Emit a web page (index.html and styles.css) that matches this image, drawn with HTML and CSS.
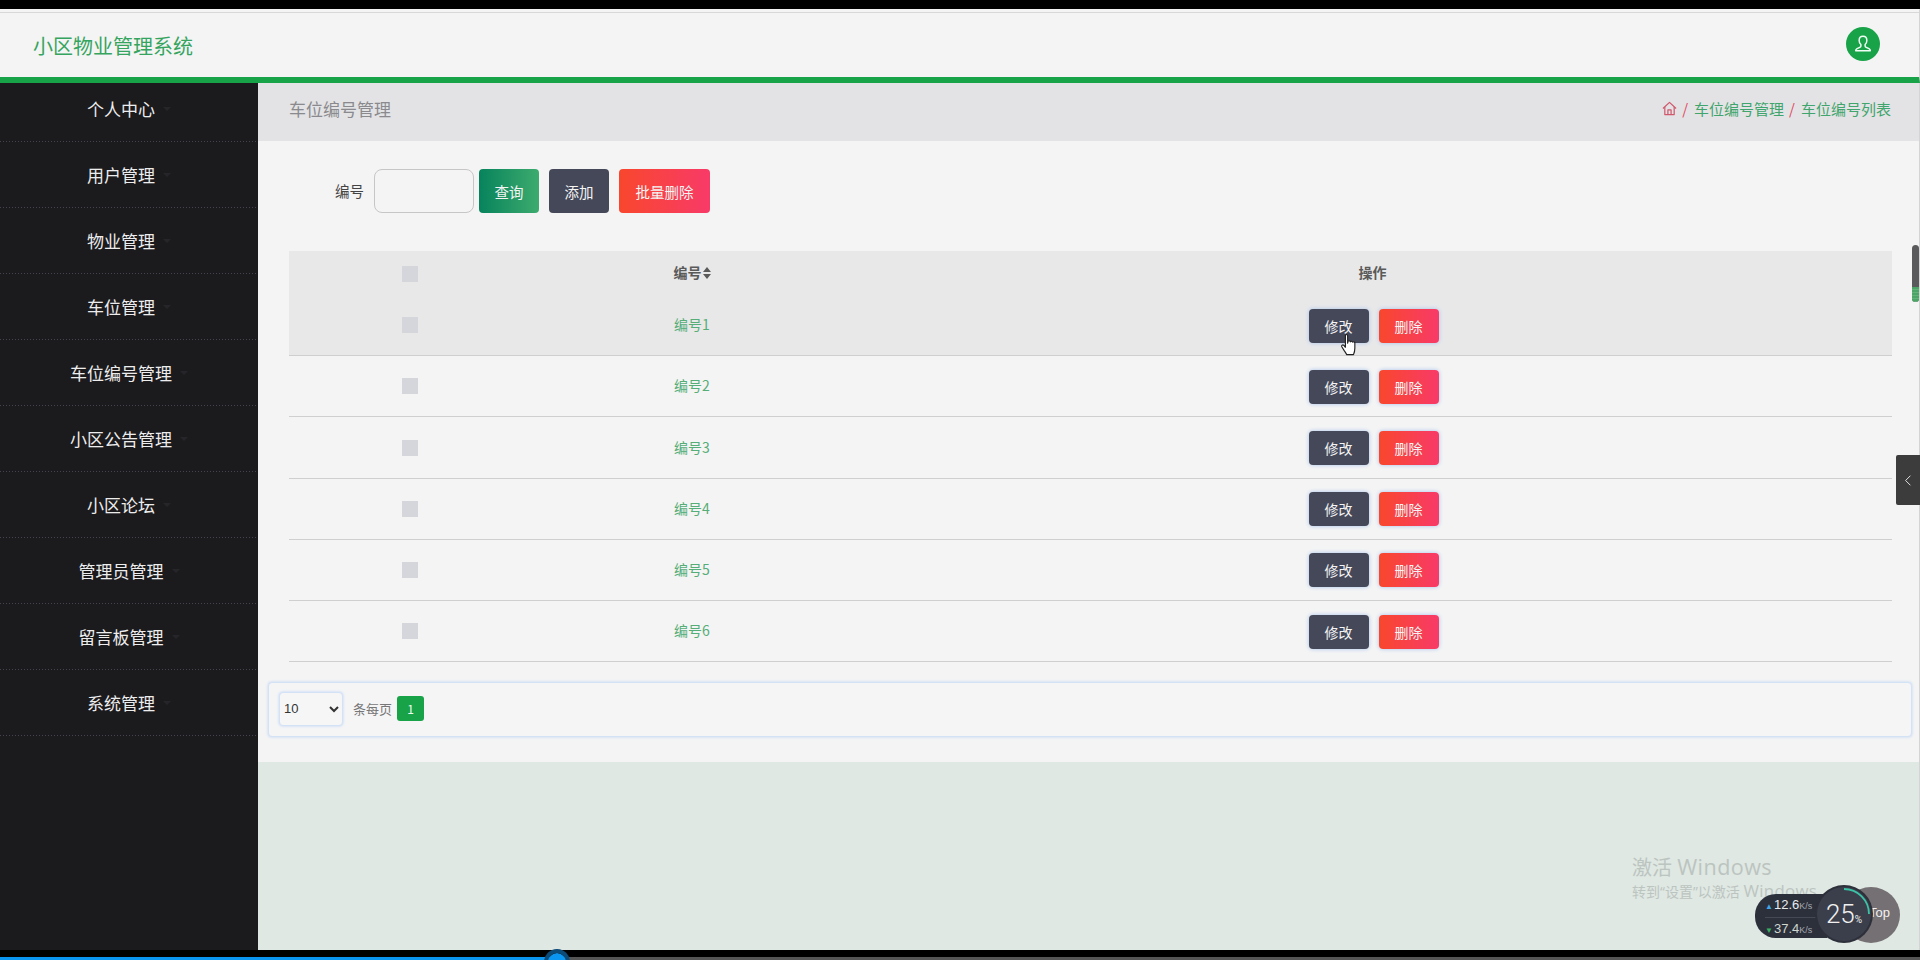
FILE: index.html
```html
<!DOCTYPE html>
<html lang="zh-CN">
<head>
<meta charset="utf-8">
<title>小区物业管理系统</title>
<link rel="stylesheet" href="styles.css">
</head>
<body>
<div class="screen">
  <div class="top-strip"></div>
  <header class="header">
    <div class="brand">小区物业管理系统</div>
    <div class="avatar">
      <svg viewBox="0 0 24 24" width="22" height="22" fill="none" stroke="#f2fff6" stroke-width="1.6" stroke-linejoin="round" stroke-linecap="round"><path d="M12 3.5c-2.600 0-4.200 2-4.200 4.600 0 1.900.8 3.400 1.900 4.400v1.800c0 .7-.5 1.100-1.200 1.400l-3 1.300c-1 .5-1.500 1.200-1.500 2.400h16c0-1.200-.5-1.900-1.500-2.400l-3-1.300c-.7-.3-1.200-.7-1.200-1.400v-1.800c1.100-1 1.900-2.500 1.900-4.400 0-2.600-1.600-4.600-4.200-4.600z"/></svg>
    </div>
  </header>
  <div class="main">
    <nav class="sidebar">
      <ul class="menu">
        <li class="menu-item">个人中心</li>
        <li class="menu-item">用户管理</li>
        <li class="menu-item">物业管理</li>
        <li class="menu-item">车位管理</li>
        <li class="menu-item">车位编号管理</li>
        <li class="menu-item">小区公告管理</li>
        <li class="menu-item">小区论坛</li>
        <li class="menu-item">管理员管理</li>
        <li class="menu-item">留言板管理</li>
        <li class="menu-item">系统管理</li>
      </ul>
    </nav>
    <main class="content">
      <div class="crumb-bar">
        <div class="crumb-title">车位编号管理</div>
        <div class="crumbs">
          <svg class="home" viewBox="0 0 16 16" width="15" height="15" fill="none" stroke="#d0586c" stroke-width="1.300" stroke-linejoin="round"><path d="M1 8l7-6.500L15 8"/><path d="M3 6.500V14.500h10V6.500"/><path d="M6.300 14.500V9.500h3.400v5"/></svg>
          <span class="sep">/</span><span>车位编号管理</span><span class="sep">/</span><span>车位编号列表</span>
        </div>
      </div>
      <section class="panel">
        <form class="search">
          <label class="search-label">编号</label>
          <input class="search-input" type="text">
          <button class="btn btn-query" type="button">查询</button>
          <button class="btn btn-add" type="button">添加</button>
          <button class="btn btn-danger btn-bulk" type="button">批量删除</button>
        </form>
        <table class="grid">
          <colgroup><col class="col-check"><col class="col-no"><col></colgroup>
          <thead>
            <tr>
              <th><span class="check"></span></th>
              <th><span class="cell-text">编号<svg class="sort" viewBox="0 0 8 12" width="8" height="12" fill="#5a5a5a"><path d="M4 0l4 5H0zM4 12L0 7h8z"/></svg></span></th>
              <th><span class="cell-text">操作</span></th>
            </tr>
          </thead>
          <tbody>
            <tr class="hover">
              <td><span class="check"></span></td><td class="no"><span class="cell-text">编号1</span></td>
              <td class="ops"><button class="btn btn-small btn-add" type="button">修改</button><button class="btn btn-small btn-danger" type="button">删除</button></td>
            </tr>
            <tr>
              <td><span class="check"></span></td><td class="no"><span class="cell-text">编号2</span></td>
              <td class="ops"><button class="btn btn-small btn-add" type="button">修改</button><button class="btn btn-small btn-danger" type="button">删除</button></td>
            </tr>
            <tr>
              <td><span class="check"></span></td><td class="no"><span class="cell-text">编号3</span></td>
              <td class="ops"><button class="btn btn-small btn-add" type="button">修改</button><button class="btn btn-small btn-danger" type="button">删除</button></td>
            </tr>
            <tr>
              <td><span class="check"></span></td><td class="no"><span class="cell-text">编号4</span></td>
              <td class="ops"><button class="btn btn-small btn-add" type="button">修改</button><button class="btn btn-small btn-danger" type="button">删除</button></td>
            </tr>
            <tr>
              <td><span class="check"></span></td><td class="no"><span class="cell-text">编号5</span></td>
              <td class="ops"><button class="btn btn-small btn-add" type="button">修改</button><button class="btn btn-small btn-danger" type="button">删除</button></td>
            </tr>
            <tr>
              <td><span class="check"></span></td><td class="no"><span class="cell-text">编号6</span></td>
              <td class="ops"><button class="btn btn-small btn-add" type="button">修改</button><button class="btn btn-small btn-danger" type="button">删除</button></td>
            </tr>
          </tbody>
        </table>
        <div class="pager">
          <select class="pager-size"><option>10</option></select>
          <span class="pager-text">条每页</span>
          <span class="pager-page">1</span>
        </div>
      </section>
    </main>
  </div>
  <div class="bottom-strip"><div class="progress"></div></div>
</div>

<svg class="cursor" viewBox="0 0 20 26" width="18" height="24" fill="#fff" stroke="#222" stroke-width="1.300" stroke-linejoin="round"><path d="M6 2.500c0-1.500 2.500-1.500 2.500 0V11l.6-2.500c1.600-.5 2.200 0 2.400 1 .2-.9 2.100-1 2.500.3.500-.7 2.300-.5 2.500.9v6c0 3.500-1.500 7-1.500 7H7.500S6 21 4.500 19L2 15c-.8-1.500 1-2.800 2.300-1.500L6 15.500z"/></svg>

<div class="side-thumb"><span class="thumb-green"></span></div>
<div class="side-tab">
  <svg viewBox="0 0 10 16" width="8" height="13" fill="none" stroke="#e6e6e6" stroke-width="1.200"><path d="M8 2L2 8l6 6"/></svg>
</div>

<div class="watermark">
  <div class="wm-title">激活 <span class="wm-latin">Windows</span></div>
  <div class="wm-sub">转到“设置”以激活 <span class="wm-latin-small">Windows</span>。</div>
</div>

<div class="monitor">
  <div class="top-bubble">Top</div>
  <div class="speed">
    <div class="speed-up"><span class="up-arrow">▲</span>12.6<small>K/s</small></div>
    <div class="speed-down"><span class="down-arrow">▼</span>37.4<small>K/s</small></div>
  </div>
  <div class="gauge">
    <svg class="gauge-arc" viewBox="0 0 58 58" width="58" height="58" fill="none" stroke="#3cc2a6" stroke-width="1.800"><path d="M29 4a25 25 0 0 1 25 25"/></svg>
    <span class="gauge-num">25</span><span class="gauge-pct">%</span>
  </div>
</div>
</body>
</html>
```
FILE: styles.css
```css
* { box-sizing: border-box; }
html, body { margin: 0; height: 960px; overflow: hidden; }
body {
  font-family: "Noto Sans CJK SC", "Noto Sans", sans-serif;
  background: #000;
  position: relative;
}
.screen { display: flex; flex-direction: column; height: 960px; }
.top-strip { height: 9px; background: #000; flex: none; }
.header {
  flex: none;
  height: 74px;
  display: flex;
  align-items: center;
  justify-content: space-between;
  padding: 0 39px 0 33px;
  background: #f4f4f4;
  border-top: 1px solid #f4f4f4;
  border-right: 1px solid #d4d4d4;
  border-bottom: 6px solid #18a348;
  box-shadow: inset 0 2px 0 #f4f4f4, inset 0 3px 0 #d8d8d8;
  position: relative;
  z-index: 2;
}
.brand { font-size: 20px; line-height: 28px; color: #34a45e; margin-top: 5px; }
.avatar {
  width: 34px; height: 34px;
  border-radius: 50%;
  background: #18a348;
  display: flex; align-items: center; justify-content: center;
}
.main { flex: 1; display: flex; min-height: 0; }
.sidebar { flex: none; width: 258px; background: #1b1a1d; }
.menu { list-style: none; margin: -7px 0 0; padding: 0; }
.menu-item {
  height: 66px;
  display: flex; align-items: center; justify-content: center;
  padding-bottom: 1px;
  font-size: 17px;
  color: #ededed;
  background: repeating-linear-gradient(90deg, #44444f 0 1px, transparent 1px 3px) left bottom / 100% 1px no-repeat;
}
.menu-item::after {
  content: "";
  margin-left: 8px;
  border: 4px solid transparent;
  border-top-color: #262529;
  border-bottom: 0;
}
.content { flex: 1; background: #dfe8e3; min-width: 0; border-right: 1px solid #d4d4d4; }
.crumb-bar {
  height: 58px;
  background: #e3e3e5;
  display: flex; align-items: center; justify-content: space-between;
  padding: 0 28px 7px 31px;
}
.crumb-title { font-size: 17px; color: #8a8a8e; }
.crumbs { display: flex; align-items: center; font-size: 15px; color: #3fa56c; }
.home { margin-right: 5px; }
.sep { color: #e24a62; margin: 0 6px 0 0; }
.crumbs span + .sep { margin-left: 5px; }
.panel { height: 621px; background: #f4f4f4; padding-top: 28px; }
.search { display: flex; align-items: center; height: 44px; padding-left: 77px; }
.search-label { font-size: 14.500px; color: #444; margin: -2px 10px 0 0; }
.search-input {
  width: 100px; height: 44px;
  margin-right: 5px;
  background: #f4f4f4;
  border: 1px solid #c6c6c6;
  border-radius: 8px;
}
.btn {
  border: 0; padding: 0;
  font-family: inherit;
  color: #f4f4f4;
  border-radius: 4px;
  font-size: 14.500px;
  height: 44px;
  width: 60px;
  margin-right: 10px;
}
.btn-query { background: linear-gradient(90deg, #07835c, #3dab6e); }
.btn-add { background: #454859; }
.btn-danger { background: linear-gradient(90deg, #f8472d, #f83a68); }
.btn-bulk { width: 91px; margin-right: 0; }
.btn-small {
  height: 34px;
  box-shadow: 0 0 4px #a8c4ee;
  font-size: 14px;
}
.btn-small:last-child { margin-right: 0; }
.grid {
  margin: 38px 0 0 31px;
  width: 1603px;
  border-collapse: collapse;
  table-layout: fixed;
}
.col-check { width: 242px; }
.col-no { width: 322px; }
.grid th {
  height: 46px;
  padding: 0;
  background: #e8e8e9;
  font-size: 14px;
  font-weight: 700;
  color: #5a5a5a;
  text-align: center;
}
.grid td {
  height: 61.200px;
  padding: 0;
  text-align: center;
  font-size: 14px;
  border-bottom: 1px solid #cfcfcf;
}
.grid .ops { padding: 1px 0 0 2px; }
.grid .hover td { height: 58.800px; padding-bottom: 3px; background: #e8e8e9; }
.grid .hover .ops { padding: 0 0 0 2px; }
.cell-text { position: relative; top: -2px; }
td .cell-text { top: -1px; }
.check { display: block; width: 16px; height: 16px; margin: 0 auto; background: #d5d6dc; }
.no { color: #55ad78; font-size: 14px; }
.sort { margin-left: 1px; vertical-align: -1px; }
.pager {
  margin: 20px 7px 0 10px;
  height: 55px;
  display: flex; align-items: center;
  padding: 0 0 2px 10px;
  background: #f5f5f6;
  border: 1px solid #d4e2f6;
  border-radius: 4px;
  box-shadow: 0 0 3px #bcd3f3;
}
.pager-size {
  width: 64px; height: 34px;
  margin-right: 10px;
  padding-left: 0;
  background: #f6f6f7;
  border: 1px solid #d4e2f6;
  border-radius: 4px;
  box-shadow: 0 0 3px #bcd3f3;
  font-family: "Liberation Sans", sans-serif;
  font-size: 13px;
  color: #333;
}
.pager-text { font-size: 13px; color: #777; margin-right: 5px; }
.pager-page {
  width: 27px; height: 25px;
  background: #18a348;
  border-radius: 3px;
  color: #f0fff4;
  font-size: 12px;
  display: flex; align-items: center; justify-content: center;
}
.bottom-strip { flex: none; height: 10px; background: #000; position: relative; }
.progress {
  position: absolute; left: 0; right: 0; bottom: 0; height: 3px;
  background: linear-gradient(90deg, #0a96f0 553px, #555 553px);
}
.progress::after {
  content: "";
  position: absolute; left: 544px; top: -8px;
  width: 18px; height: 18px;
  border-radius: 50%;
  background: #0a96f0;
  border: 4px solid #0c4a78;
  background-clip: padding-box;
}
.cursor { position: absolute; left: 1340px; top: 333px; }
.side-thumb {
  position: absolute; left: 1912px; top: 245px;
  width: 7px; height: 57px;
  border-radius: 4px;
  background: #5a5a5c;
  overflow: hidden;
}
.thumb-green {
  display: block; margin-top: 42px; height: 15px;
  background: repeating-linear-gradient(180deg, #4ba566 0 2px, #62b27a 2px 3px);
}
.side-tab {
  position: absolute; left: 1896px; top: 455px;
  width: 24px; height: 50px;
  background: #3c3c3c;
  border-radius: 2px 0 0 2px;
  display: flex; align-items: center; justify-content: center;
}
.watermark { position: absolute; left: 1632px; top: 853px; color: #bcc4c0; font-family: "Open Sans", "Noto Sans CJK SC", sans-serif; }
.wm-title { font-size: 20px; line-height: 28px; }
.wm-sub { font-size: 14px; line-height: 18px; white-space: nowrap; }
.wm-latin { font-size: 1.080em; letter-spacing: .02em; }
.wm-latin-small { font-size: 1.200em; letter-spacing: .02em; }
.monitor { position: absolute; left: 1755px; top: 885px; width: 150px; height: 65px; }
.top-bubble {
  position: absolute; left: 87px; top: 2px;
  width: 58px; height: 56px;
  border-radius: 50%;
  background: #757073;
  color: #f2f2f2;
  font-family: "Liberation Sans", sans-serif;
  font-size: 13px;
  display: flex; align-items: center; justify-content: flex-end;
  padding: 0 10px 6px 0;
}
.speed {
  position: absolute; left: 0; top: 9px;
  width: 72px; height: 44px;
  border-radius: 21px 0 0 21px;
  background: #2c303b;
  font-family: "Liberation Sans", sans-serif;
  padding-left: 10px;
  color: #e8eaee;
  font-size: 13px;
  line-height: 21px;
  white-space: nowrap;
}
.speed small { font-size: 9px; color: #a4a8b0; }
.speed-up { border-bottom: 1px solid #454955; }
.up-arrow { color: #3ea6e8; font-size: 8px; margin-right: 1px; }
.down-arrow { color: #38b060; font-size: 8px; margin-right: 1px; }
.speed-down { color: #cfd6cf; }
.gauge {
  position: absolute; left: 62px; top: 2px;
  width: 54px; height: 54px;
  border-radius: 50%;
  background: #3b3f4c;
  box-shadow: 0 0 0 2px #2d303a;
  color: #f0f0f0;
  font-family: Roboto, "Liberation Sans", sans-serif;
  display: flex; align-items: baseline; justify-content: center;
  line-height: 54px;
}
.gauge-arc { position: absolute; left: -2px; top: -2px; }
.gauge-num { font-size: 26px; font-weight: 300; }
.gauge-pct { font-size: 10px; }
```
